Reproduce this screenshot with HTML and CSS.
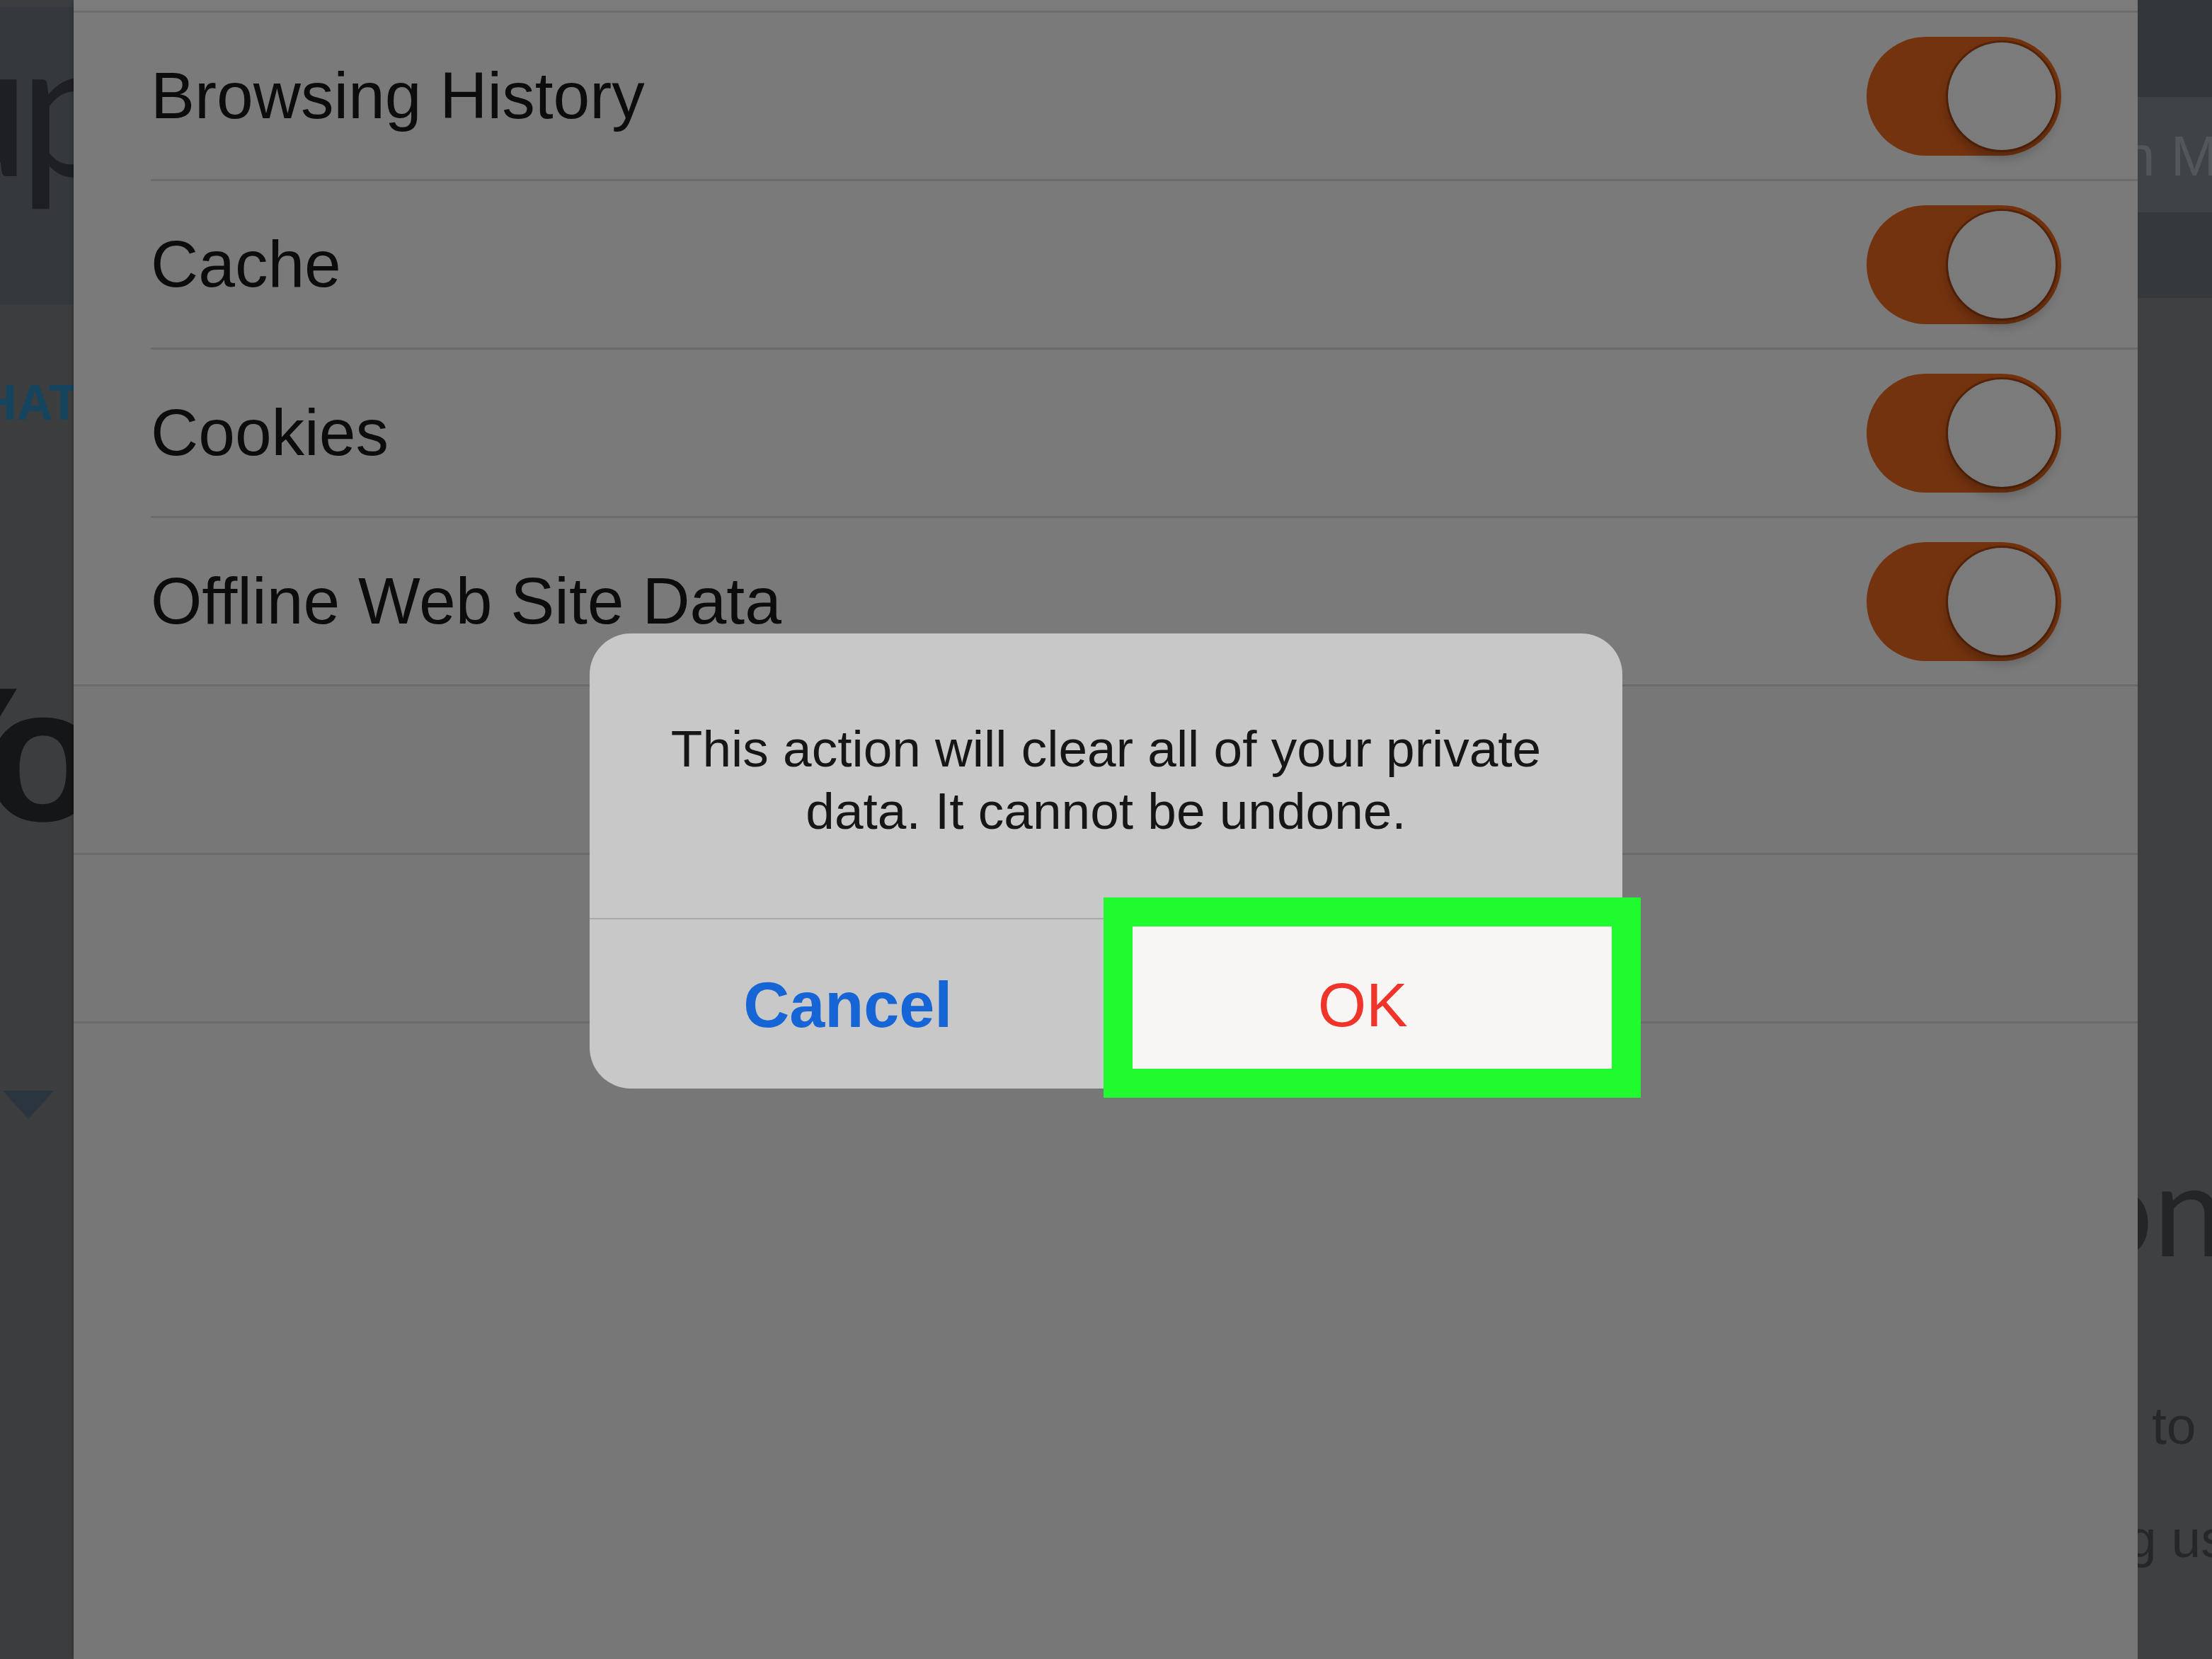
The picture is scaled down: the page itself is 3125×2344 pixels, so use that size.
FILE: index.html
```html
<!DOCTYPE html>
<html lang="en">
<head>
    <meta charset="UTF-8">
    <meta name="viewport" content="width=device-width, initial-scale=1.0">
    <title>Clear Private Data</title>
    <link rel="stylesheet" href="styles.css">
</head>
<body>

    <div class="screen">
        <!-- Page behind the settings sheet, left edge -->
        <aside class="side side-left">
            <div class="side-top">
                <div class="side-title">up</div>
            </div>
            <div class="side-nav">CHAT</div>
            <div class="side-heading">Yo</div>
            <div class="side-caret"></div>
        </aside>

        <main class="panel">
            <div class="panel-top"></div>

            <ul class="settings">
                <li class="row">
                    <span class="row-label">Browsing History</span>
                    <span class="toggle"><span class="knob"></span></span>
                </li>
                <li class="row">
                    <span class="row-label">Cache</span>
                    <span class="toggle"><span class="knob"></span></span>
                </li>
                <li class="row">
                    <span class="row-label">Cookies</span>
                    <span class="toggle"><span class="knob"></span></span>
                </li>
                <li class="row row-full">
                    <span class="row-label">Offline Web Site Data</span>
                    <span class="toggle"><span class="knob"></span></span>
                </li>
            </ul>

            <ul class="settings settings-blank">
                <li class="row row-full"></li>
                <li class="row row-full"></li>
            </ul>
        </main>

        <!-- Page behind the settings sheet, right edge -->
        <aside class="side side-right">
            <div class="band band-dark"></div>
            <div class="band band-tab">
                <div class="side-tab">n M</div>
            </div>
            <div class="band band-mid"></div>
            <div class="side-big">on</div>
            <div class="side-small side-to">to</div>
            <div class="side-small side-us">g us</div>
        </aside>

        <!-- Confirmation alert -->
        <div class="alert">
            <div class="alert-message">This action will clear all of your private data. It cannot be undone.</div>
            <div class="alert-actions">
                <div class="alert-btn btn-cancel">Cancel</div>
                <div class="alert-btn btn-ok">OK</div>
            </div>
        </div>
    </div>

</body>
</html>
```

FILE: styles.css
```css
body {
    margin: 0;
    padding: 0;
    background-color: #3d3f41;
    font-family: 'Liberation Sans', Arial, Helvetica, sans-serif;
}
.screen {
    position: relative;
    display: flex;
    width: 3125px;
    height: 2344px;
    overflow: hidden;
}

/* side strips (page behind the sheet) */
.side {
    flex: none;
    overflow: hidden;
    white-space: nowrap;
}
.side-left {
    width: 104px;
    background-color: #3b3d3f;
}
.side-top {
    height: 420px;
    background-color: #35393d;
}
.side-title {
    margin-top: 10px;
    margin-left: -108px;
    font-family: 'Lato', 'Open Sans', sans-serif;
    font-weight: 400;
    font-size: 270px;
    line-height: 270px;
    letter-spacing: -16px;
    color: #1d1f22;
}
.side-nav {
    display: flex;
    justify-content: flex-end;
    margin-top: 104px;
    margin-right: -8px;
    font-family: 'Liberation Sans Narrow', 'Liberation Sans', sans-serif;
    font-weight: bold;
    font-size: 70px;
    line-height: 70px;
    color: #15445f;
}
.side-heading {
    margin-top: 327px;
    margin-left: -152px;
    font-weight: bold;
    font-size: 270px;
    line-height: 270px;
    letter-spacing: -30px;
    color: #141618;
}
.side-caret {
    width: 0;
    height: 0;
    margin-top: 340px;
    margin-left: 4px;
    border-left: 36px solid transparent;
    border-right: 36px solid transparent;
    border-top: 40px solid #2b3540;
}

.side-right {
    width: 105px;
    background-color: #3e4042;
}
.band-dark {
    height: 137px;
    background-color: #34373a;
}
.band-tab {
    height: 163px;
    background-color: #404346;
}
.side-tab {
    padding-top: 44px;
    margin-left: -20px;
    font-size: 80px;
    line-height: 80px;
    color: #53565a;
}
.band-mid {
    height: 121px;
    background-color: #36393c;
}
.side-big {
    margin-top: 1194px;
    margin-left: -80px;
    font-family: 'Lato', 'Open Sans', sans-serif;
    font-weight: 400;
    font-size: 180px;
    line-height: 180px;
    color: #232527;
}
.side-small {
    font-size: 75px;
    line-height: 75px;
    color: #262729;
}
.side-to {
    margin-top: 182px;
    margin-left: 20px;
}
.side-us {
    margin-top: 85px;
    margin-left: -15px;
}

/* settings sheet */
.panel {
    flex: 1;
    background-color: #777777;
    box-shadow: 0 0 6px rgba(0, 0, 0, 0.35);
}
.panel-top {
    height: 15px;
    background-color: #7b7b7b;
    border-bottom: 3px solid #6d6d6d;
}
.settings {
    list-style: none;
    margin: 0;
    padding: 0;
    background-color: #7a7a7a;
}
.settings-blank {
    background-color: #777777;
}
.row {
    display: flex;
    align-items: center;
    justify-content: space-between;
    height: 235px;
    margin-left: 109px;
    padding-right: 108px;
    border-bottom: 3px solid #6b6b6b;
}
.row-full {
    margin-left: 0;
    padding-left: 109px;
}
.row-label {
    font-size: 93px;
    color: #0c0c0c;
}

/* switch, on state */
.toggle {
    display: flex;
    justify-content: flex-end;
    align-items: center;
    box-sizing: border-box;
    width: 275px;
    height: 168px;
    padding: 8px;
    border-radius: 84px;
    background-color: #74330f;
}
.knob {
    width: 152px;
    height: 152px;
    border-radius: 50%;
    background-color: #7b7b7b;
    box-shadow: 0 0 0 3px rgba(60, 24, 6, 0.55), 0 10px 16px rgba(0, 0, 0, 0.25);
}

/* alert */
.alert {
    position: absolute;
    left: 833px;
    top: 895px;
    width: 1459px;
    border-radius: 58px;
    background-color: #c8c8c8;
}
.alert-message {
    box-sizing: border-box;
    height: 404px;
    padding: 119px 100px 0;
    font-size: 73px;
    line-height: 88px;
    text-align: center;
    color: #161616;
    border-bottom: 2px solid #a9a9a9;
}
.alert-actions {
    display: grid;
    grid-template-columns: 1fr 1fr;
    height: 239px;
}
.alert-btn {
    display: flex;
    align-items: center;
    justify-content: center;
    font-size: 90px;
}
.btn-cancel {
    padding-top: 4px;
    color: #1565d6;
    font-weight: bold;
}
.btn-ok {
    margin: 10px 15px 28px 37px;
    padding: 20px 26px 0 0;
    font-size: 88px;
    color: #f0342a;
    background-color: #f7f6f5;
    outline: 41px solid #1ffb2f; /* highlight frame */
}
```
